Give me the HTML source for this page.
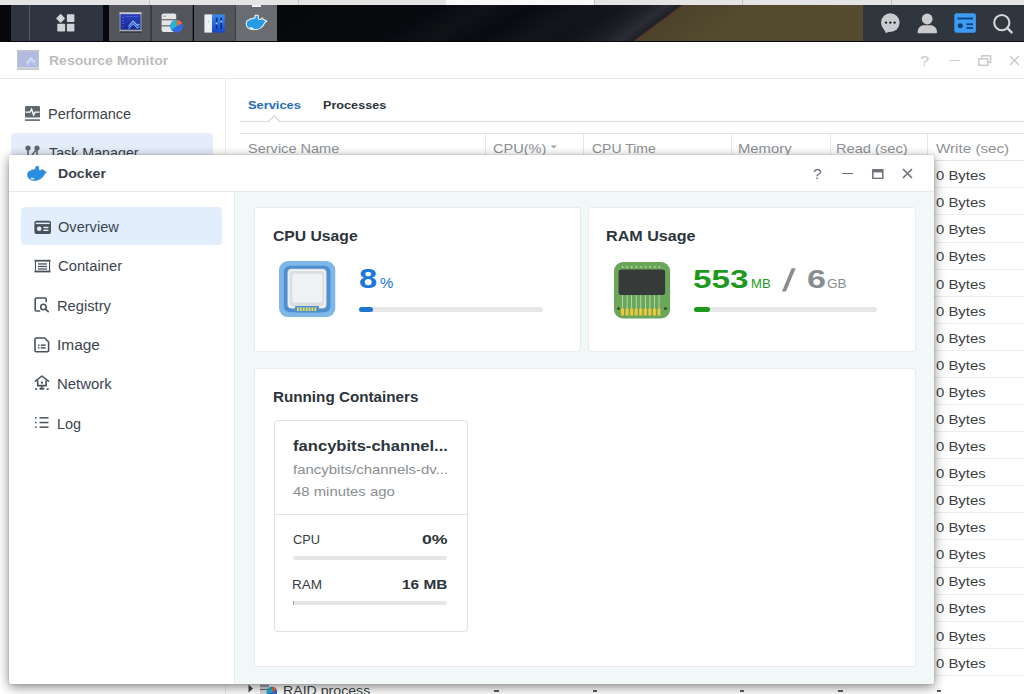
<!DOCTYPE html>
<html><head><meta charset="utf-8"><style>
html,body{margin:0;padding:0;}
body{width:1024px;height:694px;overflow:hidden;position:relative;background:#fff;font-family:"Liberation Sans",sans-serif;}
div,svg{box-sizing:border-box;}
</style></head><body>
<div style="position:absolute;left:0.00px;top:0.00px;width:1024.00px;height:5.00px;background:#e4e4e4;"></div>
<div style="position:absolute;left:446.00px;top:0.00px;width:148.00px;height:5.00px;background:#f8f8f8;"></div>
<div style="position:absolute;left:149.00px;top:0.00px;width:1.00px;height:5.00px;background:#c4c4c4;"></div>
<div style="position:absolute;left:297.50px;top:0.00px;width:1.00px;height:5.00px;background:#c4c4c4;"></div>
<div style="position:absolute;left:594.00px;top:0.00px;width:1.00px;height:5.00px;background:#c4c4c4;"></div>
<div style="position:absolute;left:742.00px;top:0.00px;width:1.00px;height:5.00px;background:#c4c4c4;"></div>
<div style="position:absolute;left:891.00px;top:0.00px;width:1.00px;height:5.00px;background:#c4c4c4;"></div>
<div style="position:absolute;left:0.00px;top:5.00px;width:1024.00px;height:36.50px;background:#07080b;"></div>
<div style="position:absolute;left:11.00px;top:5.00px;width:92.00px;height:35.50px;background:#2e3540;"></div>
<div style="position:absolute;left:29.00px;top:5.00px;width:1.00px;height:35.50px;background:#525a64;"></div>
<svg style="position:absolute;left:55.00px;top:12.00px;" width="22" height="22" viewBox="0 0 22 22"><rect x="2.3" y="2.3" width="6.6" height="6.6" rx="0.8" fill="#d0d3d7" transform="rotate(45 5.6 5.6) translate(0.6 0.6)"/><rect x="11.9" y="2.3" width="7.5" height="7.7" rx="0.8" fill="#d0d3d7"/><rect x="2.3" y="11.8" width="7.8" height="7.8" rx="0.8" fill="#d0d3d7"/><rect x="11.9" y="11.8" width="7.5" height="7.8" rx="0.8" fill="#d0d3d7"/></svg>
<div style="position:absolute;left:109.00px;top:5.00px;width:41.30px;height:35.50px;background:#52565b;"></div>
<div style="position:absolute;left:150.30px;top:5.00px;width:1.70px;height:35.50px;background:#3a3e43;"></div>
<div style="position:absolute;left:152.00px;top:5.00px;width:40.40px;height:35.50px;background:#52565b;"></div>
<div style="position:absolute;left:192.40px;top:5.00px;width:1.10px;height:35.50px;background:#3a3e43;"></div>
<div style="position:absolute;left:193.50px;top:5.00px;width:41.80px;height:35.50px;background:#52565b;"></div>
<div style="position:absolute;left:235.30px;top:5.00px;width:0.80px;height:35.50px;background:#3a3e43;"></div>
<div style="position:absolute;left:236.10px;top:5.00px;width:40.90px;height:35.50px;background:#696d72;"></div>
<div style="position:absolute;left:252.00px;top:5.00px;width:8.70px;height:2.00px;background:#f2f2f2;"></div>
<div style="position:absolute;left:277px;top:5px;width:586px;height:35.5px;background:linear-gradient(143.3deg,#07080c 0%,#0a0b10 40%,#101217 52%,#1a1d23 58%,#2a2d34 61.5%,#1e2127 63.6%,#5a3a2c 64.1%,#4d432c 64.8%,#544a2e 75%,#564b2f 100%);"></div>
<div style="position:absolute;left:277px;top:5px;width:586px;height:35.5px;background:linear-gradient(150deg,rgba(255,255,255,0) 25%,rgba(255,255,255,0.03) 33%,rgba(255,255,255,0) 40%,rgba(255,255,255,0.025) 48%,rgba(255,255,255,0) 54%);clip-path:polygon(0 0,408px 0,361px 35.5px,0 35.5px);"></div>
<div style="position:absolute;left:863.00px;top:5.00px;width:161.00px;height:35.50px;background:#30363e;"></div>
<svg style="position:absolute;left:118.50px;top:12.00px;" width="23" height="21" viewBox="0 0 23 21"><defs><linearGradient id="rmg" x1="0" y1="0" x2="0" y2="1"><stop offset="0" stop-color="#2a3fc0"/><stop offset="1" stop-color="#1a2a90"/></linearGradient></defs><rect x="0.5" y="0.4" width="22" height="20.4" fill="#8c93a0"/><rect x="0.5" y="0.4" width="22" height="1.8" fill="#c9ccd4"/><rect x="1.6" y="2.2" width="19.8" height="15.6" fill="url(#rmg)"/><rect x="0.5" y="17.8" width="22" height="1.6" fill="#a5aab4"/><rect x="0.5" y="19.4" width="22" height="1.4" fill="#2a2c33"/><rect x="3.6" y="5" width="1" height="1" fill="#6d8ae8"/><rect x="3.6" y="8" width="1" height="1" fill="#6d8ae8"/><rect x="3.6" y="11" width="1" height="1" fill="#6d8ae8"/><rect x="3.6" y="14" width="1" height="1" fill="#6d8ae8"/><rect x="6" y="4.2" width="13" height="0.8" fill="#4a66d8"/><path d="M9.5 14.5 L14 9 L18.5 13.5 L20.5 12" fill="none" stroke="#8fc4ff" stroke-width="1.1"/><path d="M9.5 17 L14 11.6 L18.5 16 L20.5 14.5" fill="none" stroke="#6aa8f8" stroke-width="1.1"/></svg>
<svg style="position:absolute;left:161.00px;top:12.50px;" width="23" height="20" viewBox="0 0 23 20"><rect x="0.6" y="0.5" width="14.6" height="18.6" rx="2" fill="#e4e5e8"/><rect x="0.6" y="6.2" width="14.6" height="1.1" fill="#55595f"/><rect x="0.6" y="12.3" width="14.6" height="1.1" fill="#55595f"/><rect x="2" y="2.5" width="3" height="1.5" fill="#c9a9ae"/><circle cx="15.6" cy="13.3" r="6.4" fill="#2f6ae0"/><path d="M15.6 13.3 L15.6 6.9 A6.4 6.4 0 0 1 21.2 10.2Z" fill="#f06a2a"/><path d="M15.6 13.3 L10.5 17 A6.4 6.4 0 0 1 15.6 6.9Z" fill="#25b6d6"/></svg>
<svg style="position:absolute;left:203.50px;top:13.50px;" width="21" height="19" viewBox="0 0 21 19"><rect x="0.4" y="0.4" width="8" height="18.2" fill="#eceef3"/><defs><linearGradient id="cpg" x1="0" y1="0" x2="0" y2="1"><stop offset="0" stop-color="#3a8cf0"/><stop offset="1" stop-color="#1448c8"/></linearGradient></defs><rect x="8" y="0.4" width="12.7" height="18.2" fill="url(#cpg)"/><rect x="11.8" y="3.6" width="1.6" height="11.5" fill="#0d2a8a"/><rect x="16.4" y="3.6" width="1.6" height="11.5" fill="#0d2a8a"/><circle cx="12.6" cy="9.4" r="1.1" fill="#8fc4ff"/><circle cx="17.2" cy="7.6" r="1.1" fill="#8fc4ff"/><circle cx="4.4" cy="12" r="2" fill="#fafbfc" stroke="#d4d7de" stroke-width="0.5"/><rect x="4" y="7" width="0.8" height="1" fill="#9aa"/></svg>
<svg style="position:absolute;left:245.00px;top:14.00px;" width="23" height="17" viewBox="0 0 23 17"><g transform="translate(0.6 0.6)"><path d="M0.6 9.2 C0.6 7.4 1.4 6 2.6 5.4 L4.2 5.4 L4.6 4.2 L7.4 4.2 L7.8 3.4 L9.4 3.4 L9.6 0.6 L12.6 0.6 L12.8 4.4 L14.6 4.8 L15.8 4.4 L16.6 3.2 L17.6 4.6 L21.2 6.6 L19.2 8.0 C17.4 12.6 13.2 15.2 8.2 15.2 C3.6 15.2 0.6 12.8 0.6 9.2Z" fill="#279be6" stroke="#eef6fb" stroke-width="1.1" stroke-linejoin="round"/><path d="M3.2 13.2 C4.8 12.2 7 12.4 8.6 14.2 C6.4 15 4.6 14.6 3.2 13.2Z" fill="#e8f4fc"/></g></svg>
<svg style="position:absolute;left:879.50px;top:12.50px;" width="21" height="21" viewBox="0 0 21 21"><circle cx="10.3" cy="9.6" r="9.3" fill="#c9cbcf"/><path d="M3.5 15 L5.8 20 L10 18.4Z" fill="#c9cbcf"/><circle cx="6" cy="9.6" r="1.2" fill="#1f2329"/><circle cx="10.3" cy="9.6" r="1.2" fill="#1f2329"/><circle cx="14.6" cy="9.6" r="1.2" fill="#1f2329"/></svg>
<svg style="position:absolute;left:917.00px;top:12.50px;" width="21" height="21" viewBox="0 0 21 21"><circle cx="10.2" cy="6" r="5.4" fill="#c9cbcf"/><path d="M0.6 19.6 C0.6 14.4 4 12.2 7 12.2 H13.4 C16.6 12.2 20 14.4 20 19.6 Q20 20.2 19.4 20.2 H1.2 Q0.6 20.2 0.6 19.6Z" fill="#c9cbcf"/></svg>
<svg style="position:absolute;left:953.50px;top:12.50px;" width="22.5" height="20.5" viewBox="0 0 22.5 20.5"><rect x="0.3" y="0.3" width="21.6" height="19.5" rx="2.2" fill="#3d9bf4"/><rect x="3.4" y="4.6" width="15.6" height="1.8" fill="#0f3f7c"/><circle cx="6.3" cy="12.8" r="2.5" fill="#0f3f7c"/><rect x="12.5" y="10.4" width="6.5" height="1.7" fill="#0f3f7c"/><rect x="12.5" y="14.2" width="6.5" height="1.7" fill="#0f3f7c"/></svg>
<svg style="position:absolute;left:991.50px;top:12.50px;" width="22" height="22" viewBox="0 0 22 22"><circle cx="9.8" cy="9.6" r="7.6" fill="none" stroke="#d3d5d8" stroke-width="2.1"/><path d="M15.4 15.2 L19.6 19.4" stroke="#d3d5d8" stroke-width="2.4" stroke-linecap="round"/></svg>
<div style="position:absolute;left:0;top:41.5px;width:1024px;height:660px;background:#fff;border-radius:5px 0 0 0;"></div>
<div style="position:absolute;left:0.00px;top:78.00px;width:1024.00px;height:1.00px;background:#e9e9e9;"></div>
<div style="position:absolute;left:224.50px;top:79.00px;width:1.00px;height:615.00px;background:#ededed;"></div>
<svg style="position:absolute;left:17.00px;top:50.00px;" width="22" height="20" viewBox="0 0 22 20"><rect x="0" y="0" width="22" height="20" fill="#c3c5cc"/><rect x="1" y="1.6" width="20" height="15.4" fill="#b3bae0"/><rect x="0" y="17.2" width="22" height="1.3" fill="#d6d8de"/><path d="M9.5 13 L14 8.2 L18.5 12.4" fill="none" stroke="#dbe8ff" stroke-width="1.2"/><path d="M9.5 15.4 L14 10.6 L18.5 14.8" fill="none" stroke="#c4d6fa" stroke-width="1.1"/></svg>
<div style="position:absolute;left:48.89px;top:54px;font-size:13.10px;line-height:13.10px;font-weight:bold;color:#bbbdc0;white-space:nowrap;transform:scaleX(1.0707);transform-origin:0 0;">Resource Monitor</div>
<div style="position:absolute;left:919.94px;top:54px;font-size:14.55px;line-height:14.55px;font-weight:normal;color:#c9cbcd;white-space:nowrap;transform:scaleX(1.1312);transform-origin:0 0;">?</div>
<div style="position:absolute;left:949.00px;top:59.50px;width:11.00px;height:1.50px;background:#cbcdcf;"></div>
<svg style="position:absolute;left:978.00px;top:55.00px;" width="14" height="11" viewBox="0 0 14 11"><rect x="3.6" y="0.8" width="9" height="6.5" fill="none" stroke="#c8cacc" stroke-width="1.5"/><rect x="0.8" y="3.8" width="9" height="6.5" fill="#fff" stroke="#c8cacc" stroke-width="1.5"/></svg>
<svg style="position:absolute;left:1009.00px;top:55.00px;" width="11" height="11" viewBox="0 0 11 11"><path d="M1 1 L10 10 M10 1 L1 10" stroke="#c8cacc" stroke-width="1.5"/></svg>
<svg style="position:absolute;left:25.00px;top:106.00px;" width="15" height="15" viewBox="0 0 15 15"><rect x="0" y="0" width="15" height="11.6" rx="1.2" fill="#5f6770"/><rect x="0" y="13.3" width="15" height="1.6" fill="#5f6770"/><path d="M0.5 6.2 H5 L6.6 3.2 L8.6 9 L10 6.2 H14.5" fill="none" stroke="#fff" stroke-width="1.3"/></svg>
<div style="position:absolute;left:48.14px;top:107px;font-size:14.55px;line-height:14.55px;font-weight:normal;color:#3e444a;white-space:nowrap;transform:scaleX(0.9990);transform-origin:0 0;">Performance</div>
<div style="position:absolute;left:11.20px;top:133.40px;width:201.60px;height:46.60px;background:#e3eefa;border-radius:4px;"></div>
<svg style="position:absolute;left:25.00px;top:145.00px;" width="16" height="16" viewBox="0 0 16 16"><circle cx="3" cy="3" r="2.6" fill="#5f6770"/><circle cx="12" cy="3" r="2.6" fill="#5f6770"/><path d="M3 3 V15 M12 3 V15 M4 14 L11 5" stroke="#5f6770" stroke-width="1.6"/></svg>
<div style="position:absolute;left:48.91px;top:146px;font-size:14.55px;line-height:14.55px;font-weight:normal;color:#3e444a;white-space:nowrap;transform:scaleX(0.9806);transform-origin:0 0;">Task Manager</div>
<div style="position:absolute;left:248.01px;top:100px;font-size:11.80px;line-height:11.80px;font-weight:bold;color:#1f6db5;white-space:nowrap;transform:scaleX(1.0894);transform-origin:0 0;">Services</div>
<div style="position:absolute;left:322.98px;top:100px;font-size:11.80px;line-height:11.80px;font-weight:bold;color:#2b3137;white-space:nowrap;transform:scaleX(1.0723);transform-origin:0 0;">Processes</div>
<div style="position:absolute;left:240.00px;top:121.00px;width:784.00px;height:1.00px;background:#dcdcdc;"></div>
<svg style="position:absolute;left:266.00px;top:114.50px;" width="16" height="8" viewBox="0 0 16 8"><rect x="2.6" y="6.4" width="10.6" height="1.4" fill="#fff"/><path d="M1.6 7.2 L8.3 0.9 L14 7.2" fill="#fff" stroke="#d2d2d2" stroke-width="1.1"/></svg>
<div style="position:absolute;left:240.00px;top:133.00px;width:784.00px;height:1.00px;background:#e4e4e4;"></div>
<div style="position:absolute;left:247.75px;top:142px;font-size:13.10px;line-height:13.10px;font-weight:normal;color:#8d9195;white-space:nowrap;transform:scaleX(1.1099);transform-origin:0 0;">Service Name</div>
<div style="position:absolute;left:493.07px;top:142px;font-size:13.10px;line-height:13.10px;font-weight:normal;color:#8d9195;white-space:nowrap;transform:scaleX(1.1123);transform-origin:0 0;">CPU(%)</div>
<div style="position:absolute;left:591.50px;top:142px;font-size:13.10px;line-height:13.10px;font-weight:normal;color:#8d9195;white-space:nowrap;transform:scaleX(1.0680);transform-origin:0 0;">CPU Time</div>
<div style="position:absolute;left:737.91px;top:142px;font-size:13.10px;line-height:13.10px;font-weight:normal;color:#8d9195;white-space:nowrap;transform:scaleX(1.1331);transform-origin:0 0;">Memory</div>
<div style="position:absolute;left:836.43px;top:142px;font-size:13.10px;line-height:13.10px;font-weight:normal;color:#8d9195;white-space:nowrap;transform:scaleX(1.1185);transform-origin:0 0;">Read (sec)</div>
<div style="position:absolute;left:935.82px;top:142px;font-size:13.10px;line-height:13.10px;font-weight:normal;color:#8d9195;white-space:nowrap;transform:scaleX(1.1599);transform-origin:0 0;">Write (sec)</div>
<svg style="position:absolute;left:550.00px;top:145.00px;" width="8" height="4" viewBox="0 0 8 4"><path d="M0.6 0.4 L6.8 0.4 L3.7 3.2Z" fill="#9a9ea2"/></svg>
<div style="position:absolute;left:485.00px;top:134.00px;width:1.00px;height:26.00px;background:#e8e8e8;"></div>
<div style="position:absolute;left:583.00px;top:134.00px;width:1.00px;height:26.00px;background:#e8e8e8;"></div>
<div style="position:absolute;left:731.00px;top:134.00px;width:1.00px;height:26.00px;background:#e8e8e8;"></div>
<div style="position:absolute;left:829.50px;top:134.00px;width:1.00px;height:26.00px;background:#e8e8e8;"></div>
<div style="position:absolute;left:927.00px;top:134.00px;width:1.00px;height:26.00px;background:#e8e8e8;"></div>
<div style="position:absolute;left:240.00px;top:160.00px;width:784.00px;height:1.00px;background:#e6e6e6;"></div>
<div style="position:absolute;left:240.00px;top:187.38px;width:784.00px;height:1.00px;background:#ececec;"></div>
<div style="position:absolute;left:240.00px;top:214.46px;width:784.00px;height:1.00px;background:#ececec;"></div>
<div style="position:absolute;left:240.00px;top:241.54px;width:784.00px;height:1.00px;background:#ececec;"></div>
<div style="position:absolute;left:240.00px;top:268.62px;width:784.00px;height:1.00px;background:#ececec;"></div>
<div style="position:absolute;left:240.00px;top:295.70px;width:784.00px;height:1.00px;background:#ececec;"></div>
<div style="position:absolute;left:240.00px;top:322.78px;width:784.00px;height:1.00px;background:#ececec;"></div>
<div style="position:absolute;left:240.00px;top:349.86px;width:784.00px;height:1.00px;background:#ececec;"></div>
<div style="position:absolute;left:240.00px;top:376.94px;width:784.00px;height:1.00px;background:#ececec;"></div>
<div style="position:absolute;left:240.00px;top:404.02px;width:784.00px;height:1.00px;background:#ececec;"></div>
<div style="position:absolute;left:240.00px;top:431.10px;width:784.00px;height:1.00px;background:#ececec;"></div>
<div style="position:absolute;left:240.00px;top:458.18px;width:784.00px;height:1.00px;background:#ececec;"></div>
<div style="position:absolute;left:240.00px;top:485.26px;width:784.00px;height:1.00px;background:#ececec;"></div>
<div style="position:absolute;left:240.00px;top:512.34px;width:784.00px;height:1.00px;background:#ececec;"></div>
<div style="position:absolute;left:240.00px;top:539.42px;width:784.00px;height:1.00px;background:#ececec;"></div>
<div style="position:absolute;left:240.00px;top:566.50px;width:784.00px;height:1.00px;background:#ececec;"></div>
<div style="position:absolute;left:240.00px;top:593.58px;width:784.00px;height:1.00px;background:#ececec;"></div>
<div style="position:absolute;left:240.00px;top:620.66px;width:784.00px;height:1.00px;background:#ececec;"></div>
<div style="position:absolute;left:240.00px;top:647.74px;width:784.00px;height:1.00px;background:#ececec;"></div>
<div style="position:absolute;left:240.00px;top:674.82px;width:784.00px;height:1.00px;background:#ececec;"></div>
<div style="position:absolute;left:240.00px;top:701.90px;width:784.00px;height:1.00px;background:#ececec;"></div>
<div style="position:absolute;left:935.60px;top:169px;font-size:13.10px;line-height:13.10px;font-weight:normal;color:#3a3f44;white-space:nowrap;transform:scaleX(1.1380);transform-origin:0 0;">0 Bytes</div>
<div style="position:absolute;left:935.60px;top:196px;font-size:13.10px;line-height:13.10px;font-weight:normal;color:#3a3f44;white-space:nowrap;transform:scaleX(1.1380);transform-origin:0 0;">0 Bytes</div>
<div style="position:absolute;left:935.60px;top:223px;font-size:13.10px;line-height:13.10px;font-weight:normal;color:#3a3f44;white-space:nowrap;transform:scaleX(1.1380);transform-origin:0 0;">0 Bytes</div>
<div style="position:absolute;left:935.60px;top:250px;font-size:13.10px;line-height:13.10px;font-weight:normal;color:#3a3f44;white-space:nowrap;transform:scaleX(1.1380);transform-origin:0 0;">0 Bytes</div>
<div style="position:absolute;left:935.60px;top:278px;font-size:13.10px;line-height:13.10px;font-weight:normal;color:#3a3f44;white-space:nowrap;transform:scaleX(1.1380);transform-origin:0 0;">0 Bytes</div>
<div style="position:absolute;left:935.60px;top:305px;font-size:13.10px;line-height:13.10px;font-weight:normal;color:#3a3f44;white-space:nowrap;transform:scaleX(1.1380);transform-origin:0 0;">0 Bytes</div>
<div style="position:absolute;left:935.60px;top:332px;font-size:13.10px;line-height:13.10px;font-weight:normal;color:#3a3f44;white-space:nowrap;transform:scaleX(1.1380);transform-origin:0 0;">0 Bytes</div>
<div style="position:absolute;left:935.60px;top:359px;font-size:13.10px;line-height:13.10px;font-weight:normal;color:#3a3f44;white-space:nowrap;transform:scaleX(1.1380);transform-origin:0 0;">0 Bytes</div>
<div style="position:absolute;left:935.60px;top:386px;font-size:13.10px;line-height:13.10px;font-weight:normal;color:#3a3f44;white-space:nowrap;transform:scaleX(1.1380);transform-origin:0 0;">0 Bytes</div>
<div style="position:absolute;left:935.60px;top:413px;font-size:13.10px;line-height:13.10px;font-weight:normal;color:#3a3f44;white-space:nowrap;transform:scaleX(1.1380);transform-origin:0 0;">0 Bytes</div>
<div style="position:absolute;left:935.60px;top:440px;font-size:13.10px;line-height:13.10px;font-weight:normal;color:#3a3f44;white-space:nowrap;transform:scaleX(1.1380);transform-origin:0 0;">0 Bytes</div>
<div style="position:absolute;left:935.60px;top:467px;font-size:13.10px;line-height:13.10px;font-weight:normal;color:#3a3f44;white-space:nowrap;transform:scaleX(1.1380);transform-origin:0 0;">0 Bytes</div>
<div style="position:absolute;left:935.60px;top:494px;font-size:13.10px;line-height:13.10px;font-weight:normal;color:#3a3f44;white-space:nowrap;transform:scaleX(1.1380);transform-origin:0 0;">0 Bytes</div>
<div style="position:absolute;left:935.60px;top:521px;font-size:13.10px;line-height:13.10px;font-weight:normal;color:#3a3f44;white-space:nowrap;transform:scaleX(1.1380);transform-origin:0 0;">0 Bytes</div>
<div style="position:absolute;left:935.60px;top:548px;font-size:13.10px;line-height:13.10px;font-weight:normal;color:#3a3f44;white-space:nowrap;transform:scaleX(1.1380);transform-origin:0 0;">0 Bytes</div>
<div style="position:absolute;left:935.60px;top:575px;font-size:13.10px;line-height:13.10px;font-weight:normal;color:#3a3f44;white-space:nowrap;transform:scaleX(1.1380);transform-origin:0 0;">0 Bytes</div>
<div style="position:absolute;left:935.60px;top:602px;font-size:13.10px;line-height:13.10px;font-weight:normal;color:#3a3f44;white-space:nowrap;transform:scaleX(1.1380);transform-origin:0 0;">0 Bytes</div>
<div style="position:absolute;left:935.60px;top:630px;font-size:13.10px;line-height:13.10px;font-weight:normal;color:#3a3f44;white-space:nowrap;transform:scaleX(1.1380);transform-origin:0 0;">0 Bytes</div>
<div style="position:absolute;left:935.60px;top:657px;font-size:13.10px;line-height:13.10px;font-weight:normal;color:#3a3f44;white-space:nowrap;transform:scaleX(1.1380);transform-origin:0 0;">0 Bytes</div>
<div style="position:absolute;left:494.40px;top:690.00px;width:4.70px;height:1.70px;background:#5a5e62;"></div>
<div style="position:absolute;left:592.80px;top:690.00px;width:4.70px;height:1.70px;background:#5a5e62;"></div>
<div style="position:absolute;left:739.70px;top:690.00px;width:4.70px;height:1.70px;background:#5a5e62;"></div>
<div style="position:absolute;left:838.20px;top:690.00px;width:4.70px;height:1.70px;background:#5a5e62;"></div>
<div style="position:absolute;left:936.50px;top:690.00px;width:4.70px;height:1.70px;background:#5a5e62;"></div>
<svg style="position:absolute;left:248.00px;top:684.00px;" width="6" height="9" viewBox="0 0 6 9"><path d="M0.5 0.5 L5 4.5 L0.5 8.5Z" fill="#444"/></svg>
<svg style="position:absolute;left:259.00px;top:683.00px;" width="18" height="11" viewBox="0 0 18 11"><rect x="1" y="1" width="9" height="10" fill="#d5d8dc"/><rect x="1" y="2.5" width="9" height="1" fill="#6a6f75"/><rect x="1" y="6" width="9" height="1" fill="#6a6f75"/><circle cx="13" cy="9.2" r="5.4" fill="#3568d8"/><path d="M13 9.2 L13 3.8 A5.4 5.4 0 0 1 17.6 6.4Z" fill="#e0703a"/><path d="M13 9.2 L8 11 A5.4 5.4 0 0 1 13 3.8Z" fill="#1fb0c8"/></svg>
<div style="position:absolute;left:283.27px;top:684px;font-size:13.50px;line-height:13.50px;font-weight:normal;color:#3a3f44;white-space:nowrap;transform:scaleX(1.0472);transform-origin:0 0;">RAID process</div>
<div style="position:absolute;left:8.6px;top:154.7px;width:925.1px;height:529.4px;background:#fff;border-radius:2px;box-shadow:0 3px 12px rgba(0,0,0,0.48), 0 0 2px rgba(0,0,0,0.2);overflow:hidden;">
</div>
<div style="position:absolute;left:8.60px;top:190.80px;width:925.10px;height:1.00px;background:#e6e9eb;"></div>
<div style="position:absolute;left:234.00px;top:191.80px;width:699.70px;height:492.40px;background:#f2f7f7;border-bottom-right-radius:3px;"></div>
<div style="position:absolute;left:233.60px;top:191.80px;width:1.00px;height:492.40px;background:#e7ecee;"></div>
<svg style="position:absolute;left:26.80px;top:165.80px;" width="21" height="16" viewBox="0 0 21 16"><g transform="scale(0.92 0.95)"><path d="M0.6 9.2 C0.6 7.4 1.4 6 2.6 5.4 L4.2 5.4 L4.6 4.2 L7.4 4.2 L7.8 3.4 L9.4 3.4 L9.6 0.6 L12.6 0.6 L12.8 4.4 L14.6 4.8 L15.8 4.4 L16.6 3.2 L17.6 4.6 L21.2 6.6 L19.2 8.0 C17.4 12.6 13.2 15.2 8.2 15.2 C3.6 15.2 0.6 12.8 0.6 9.2Z" fill="#2a8de0" stroke="#1f74c4" stroke-width="0.6" stroke-linejoin="round"/><path d="M3.4 13 C5 12 7 12.2 8.6 13.8 C6.5 14.6 4.8 14.3 3.4 13Z" fill="#dff0fb"/></g></svg>
<div style="position:absolute;left:57.88px;top:167px;font-size:13.10px;line-height:13.10px;font-weight:bold;color:#3a4047;white-space:nowrap;transform:scaleX(1.0793);transform-origin:0 0;">Docker</div>
<div style="position:absolute;left:813.08px;top:167px;font-size:14.85px;line-height:14.85px;font-weight:normal;color:#6b7177;white-space:nowrap;transform:scaleX(1.0522);transform-origin:0 0;">?</div>
<div style="position:absolute;left:841.70px;top:172.50px;width:11.60px;height:1.50px;background:#6b7177;"></div>
<svg style="position:absolute;left:871.50px;top:168.50px;" width="12" height="10" viewBox="0 0 12 10"><rect x="0.8" y="0.8" width="10" height="8.6" fill="none" stroke="#6b7177" stroke-width="1.5"/><rect x="0.8" y="0.8" width="10" height="2.6" fill="#6b7177"/></svg>
<svg style="position:absolute;left:902.00px;top:168.30px;" width="11" height="11" viewBox="0 0 11 11"><path d="M1 1 L10 10 M10 1 L1 10" stroke="#6b7177" stroke-width="1.6"/></svg>
<div style="position:absolute;left:20.80px;top:206.80px;width:201.50px;height:38.70px;background:#e2eefb;border-radius:4px;"></div>
<div style="position:absolute;left:57.84px;top:220px;font-size:14.55px;line-height:14.55px;font-weight:normal;color:#3b4651;white-space:nowrap;transform:scaleX(1.0030);transform-origin:0 0;">Overview</div>
<div style="position:absolute;left:57.76px;top:259px;font-size:14.55px;line-height:14.55px;font-weight:normal;color:#3b4651;white-space:nowrap;transform:scaleX(1.0156);transform-origin:0 0;">Container</div>
<div style="position:absolute;left:57.32px;top:299px;font-size:14.55px;line-height:14.55px;font-weight:normal;color:#3b4651;white-space:nowrap;transform:scaleX(1.0108);transform-origin:0 0;">Registry</div>
<div style="position:absolute;left:57.11px;top:338px;font-size:14.55px;line-height:14.55px;font-weight:normal;color:#3b4651;white-space:nowrap;transform:scaleX(1.0628);transform-origin:0 0;">Image</div>
<div style="position:absolute;left:57.31px;top:377px;font-size:14.55px;line-height:14.55px;font-weight:normal;color:#3b4651;white-space:nowrap;transform:scaleX(1.0261);transform-origin:0 0;">Network</div>
<div style="position:absolute;left:57.35px;top:417px;font-size:14.55px;line-height:14.55px;font-weight:normal;color:#3b4651;white-space:nowrap;transform:scaleX(0.9902);transform-origin:0 0;">Log</div>
<svg style="position:absolute;left:33.50px;top:219.50px;" width="18" height="15" viewBox="0 0 18 15"><rect x="0.4" y="0.8" width="16.6" height="13.2" rx="2" fill="#4a535b"/><rect x="1.8" y="2.6" width="13.8" height="1.5" fill="#e1edf9"/><circle cx="5.2" cy="8.7" r="2.3" fill="#e1edf9"/><rect x="9.4" y="6.8" width="5" height="1.4" fill="#e1edf9"/><rect x="9.4" y="9.6" width="5" height="1.4" fill="#e1edf9"/></svg>
<svg style="position:absolute;left:33.50px;top:258.50px;" width="17" height="15" viewBox="0 0 17 15"><rect x="0.5" y="0.8" width="16" height="1.8" fill="#4a535b"/><rect x="0.5" y="11.6" width="16" height="1.8" fill="#4a535b"/><rect x="0.9" y="2.4" width="1.1" height="9.4" fill="#4a535b"/><rect x="15" y="2.4" width="1.1" height="9.4" fill="#4a535b"/><rect x="4" y="4.3" width="9" height="1.3" fill="#4a535b"/><rect x="4" y="6.8" width="9" height="1.3" fill="#4a535b"/><rect x="4" y="9.3" width="9" height="1.3" fill="#4a535b"/></svg>
<svg style="position:absolute;left:34.00px;top:297.00px;" width="16" height="16" viewBox="0 0 16 16"><path d="M5.6 14 H2.4 Q1.2 14 1.2 12.8 V2.2 Q1.2 1 2.4 1 H11 Q12.2 1 12.2 2.2 V4.6" fill="none" stroke="#4a535b" stroke-width="1.6" stroke-linecap="round"/><circle cx="9.4" cy="10" r="2.7" fill="none" stroke="#4a535b" stroke-width="1.6"/><path d="M11.5 12.1 L14.2 14.6" stroke="#4a535b" stroke-width="1.7" stroke-linecap="round"/></svg>
<svg style="position:absolute;left:34.00px;top:336.50px;" width="16" height="16" viewBox="0 0 16 16"><path d="M2.2 1 H10.6 L14.6 5 V13.6 Q14.6 14.8 13.4 14.8 H2.2 Q1 14.8 1 13.6 V2.2 Q1 1 2.2 1Z" fill="none" stroke="#4a535b" stroke-width="1.6" stroke-linejoin="round"/><rect x="4" y="7.4" width="1.5" height="1.5" fill="#4a535b"/><rect x="6.8" y="7.4" width="4.8" height="1.5" fill="#4a535b"/><rect x="4" y="10.1" width="1.5" height="1.5" fill="#4a535b"/><rect x="6.8" y="10.1" width="4.8" height="1.5" fill="#4a535b"/></svg>
<svg style="position:absolute;left:34.00px;top:375.00px;" width="16" height="15" viewBox="0 0 16 15"><path d="M1.4 6.2 L7.9 1 L14.4 6.2" fill="none" stroke="#4a535b" stroke-width="1.6" stroke-linecap="round" stroke-linejoin="round"/><path d="M3.7 5.6 V10.6 H12.1 V5.6" fill="none" stroke="#4a535b" stroke-width="1.6"/><rect x="6.9" y="6.6" width="2" height="2" fill="#4a535b"/><path d="M7.9 10.6 V12.6" stroke="#4a535b" stroke-width="1.5"/><rect x="1" y="13.3" width="2.2" height="1.5" fill="#4a535b"/><rect x="12.6" y="13.3" width="2.2" height="1.5" fill="#4a535b"/><rect x="5.4" y="12.6" width="5" height="2.2" rx="1" fill="#4a535b"/></svg>
<svg style="position:absolute;left:34.00px;top:416.00px;" width="16" height="13" viewBox="0 0 16 13"><rect x="1" y="1.1" width="1.6" height="1.5" fill="#4a535b"/><rect x="1" y="5.8" width="1.6" height="1.5" fill="#4a535b"/><rect x="1" y="10.4" width="1.6" height="1.5" fill="#4a535b"/><rect x="5.5" y="1.1" width="9" height="1.5" fill="#4a535b"/><rect x="5.5" y="5.8" width="9" height="1.5" fill="#4a535b"/><rect x="5.5" y="10.4" width="9" height="1.5" fill="#4a535b"/></svg>
<div style="position:absolute;left:254.00px;top:207.40px;width:327.00px;height:144.20px;background:#fff;border-radius:3px;border:1px solid #e7ebed;"></div>
<div style="position:absolute;left:588.40px;top:207.40px;width:327.20px;height:144.20px;background:#fff;border-radius:3px;border:1px solid #e7ebed;"></div>
<div style="position:absolute;left:254.00px;top:367.90px;width:661.60px;height:299.40px;background:#fff;border-radius:3px;border:1px solid #e7ebed;"></div>
<div style="position:absolute;left:273.27px;top:229px;font-size:14.55px;line-height:14.55px;font-weight:bold;color:#2c343c;white-space:nowrap;transform:scaleX(1.0797);transform-origin:0 0;">CPU Usage</div>
<div style="position:absolute;left:606.25px;top:229px;font-size:14.55px;line-height:14.55px;font-weight:bold;color:#2c343c;white-space:nowrap;transform:scaleX(1.1075);transform-origin:0 0;">RAM Usage</div>
<svg style="position:absolute;left:279.30px;top:261.20px;" width="57" height="57" viewBox="0 0 57 57"><rect x="0" y="0" width="56.3" height="56.1" rx="9" fill="#7fb7e8"/><rect x="4.8" y="4.8" width="46.7" height="46.5" rx="6" fill="#4e8fd0"/><rect x="8.5" y="7.8" width="39" height="39.8" rx="4" fill="#dcdde1"/><rect x="10" y="9.3" width="36" height="36.8" rx="3" fill="none" stroke="#f4f5f6" stroke-width="1.2"/><rect x="13.3" y="12.8" width="30" height="28.6" rx="2.5" fill="#f0f1f3"/><rect x="16" y="45" width="24" height="6.5" rx="1" fill="#4e8fd0"/><rect x="18.0" y="46.4" width="1.9" height="3.6" fill="#e0dc5c"/><rect x="20.9" y="46.4" width="1.9" height="3.6" fill="#e0dc5c"/><rect x="23.8" y="46.4" width="1.9" height="3.6" fill="#e0dc5c"/><rect x="26.7" y="46.4" width="1.9" height="3.6" fill="#e0dc5c"/><rect x="29.6" y="46.4" width="1.9" height="3.6" fill="#e0dc5c"/><rect x="32.5" y="46.4" width="1.9" height="3.6" fill="#e0dc5c"/><rect x="35.4" y="46.4" width="1.9" height="3.6" fill="#e0dc5c"/></svg>
<div style="position:absolute;left:359.22px;top:265px;font-size:27.60px;line-height:27.60px;font-weight:bold;color:#1a78d6;white-space:nowrap;transform:scaleX(1.1858);transform-origin:0 0;">8</div>
<div style="position:absolute;left:380.18px;top:277px;font-size:13.95px;line-height:13.95px;font-weight:normal;color:#1a78d6;white-space:nowrap;transform:scaleX(1.0753);transform-origin:0 0;">%</div>
<div style="position:absolute;left:359.10px;top:307.40px;width:184.00px;height:4.90px;background:#e5e6e8;border-radius:2.5px;"></div>
<div style="position:absolute;left:359.10px;top:307.40px;width:14.30px;height:4.90px;background:#1e76d0;border-radius:2.5px;"></div>
<svg style="position:absolute;left:613.90px;top:262.00px;" width="57" height="57" viewBox="0 0 57 57"><rect x="0" y="0" width="56.1" height="56.4" rx="9" fill="#6aa75b"/><rect x="8.00" y="4.3" width="1.2" height="1.5" fill="#d4e8c8"/><rect x="12.60" y="4.3" width="1.2" height="1.5" fill="#d4e8c8"/><rect x="17.20" y="4.3" width="1.2" height="1.5" fill="#d4e8c8"/><rect x="21.80" y="4.3" width="1.2" height="1.5" fill="#d4e8c8"/><rect x="26.40" y="4.3" width="1.2" height="1.5" fill="#d4e8c8"/><rect x="31.00" y="4.3" width="1.2" height="1.5" fill="#d4e8c8"/><rect x="35.60" y="4.3" width="1.2" height="1.5" fill="#d4e8c8"/><rect x="40.20" y="4.3" width="1.2" height="1.5" fill="#d4e8c8"/><rect x="44.80" y="4.3" width="1.2" height="1.5" fill="#d4e8c8"/><rect x="4.6" y="7.5" width="46.5" height="25.5" rx="2.5" fill="#363a39"/><rect x="8.20" y="33" width="0.7" height="14" fill="#cfe6c2"/><rect x="12.76" y="33" width="0.7" height="14" fill="#cfe6c2"/><rect x="17.32" y="33" width="0.7" height="14" fill="#cfe6c2"/><rect x="21.88" y="33" width="0.7" height="14" fill="#cfe6c2"/><rect x="26.44" y="33" width="0.7" height="14" fill="#cfe6c2"/><rect x="31.00" y="33" width="0.7" height="14" fill="#cfe6c2"/><rect x="35.56" y="33" width="0.7" height="14" fill="#cfe6c2"/><rect x="40.12" y="33" width="0.7" height="14" fill="#cfe6c2"/><rect x="44.68" y="33" width="0.7" height="14" fill="#cfe6c2"/><rect x="7.00" y="46.5" width="3" height="7" rx="0.5" fill="#f2c73a"/><rect x="11.56" y="46.5" width="3" height="7" rx="0.5" fill="#f2c73a"/><rect x="16.12" y="46.5" width="3" height="7" rx="0.5" fill="#f2c73a"/><rect x="20.68" y="46.5" width="3" height="7" rx="0.5" fill="#f2c73a"/><rect x="25.24" y="46.5" width="3" height="7" rx="0.5" fill="#f2c73a"/><rect x="29.80" y="46.5" width="3" height="7" rx="0.5" fill="#f2c73a"/><rect x="34.36" y="46.5" width="3" height="7" rx="0.5" fill="#f2c73a"/><rect x="38.92" y="46.5" width="3" height="7" rx="0.5" fill="#f2c73a"/><rect x="43.48" y="46.5" width="3" height="7" rx="0.5" fill="#f2c73a"/><circle cx="4.5" cy="46.5" r="1.5" fill="#33502c"/><circle cx="51.5" cy="46.5" r="1.5" fill="#33502c"/></svg>
<div style="position:absolute;left:693.30px;top:266px;font-size:26.15px;line-height:26.15px;font-weight:bold;color:#1d9a1d;white-space:nowrap;transform:scaleX(1.2739);transform-origin:0 0;">553</div>
<div style="position:absolute;left:751.05px;top:277px;font-size:13.10px;line-height:13.10px;font-weight:normal;color:#1d9a1d;white-space:nowrap;transform:scaleX(0.9974);transform-origin:0 0;">MB</div>
<svg style="position:absolute;left:781.00px;top:267.00px;" width="16" height="26" viewBox="0 0 16 26"><path d="M10.6 1.2 H14.6 L5 24.6 H1Z" fill="#888c90"/></svg>
<div style="position:absolute;left:807.00px;top:266px;font-size:26.15px;line-height:26.15px;font-weight:bold;color:#888c90;white-space:nowrap;transform:scaleX(1.3089);transform-origin:0 0;">6</div>
<div style="position:absolute;left:827.02px;top:277px;font-size:13.10px;line-height:13.10px;font-weight:normal;color:#888c90;white-space:nowrap;transform:scaleX(1.0329);transform-origin:0 0;">GB</div>
<div style="position:absolute;left:693.50px;top:307.00px;width:183.60px;height:5.30px;background:#e5e6e8;border-radius:2.5px;"></div>
<div style="position:absolute;left:693.50px;top:307.00px;width:16.00px;height:5.30px;background:#1d9a1d;border-radius:2.5px;"></div>
<div style="position:absolute;left:272.91px;top:390px;font-size:14.55px;line-height:14.55px;font-weight:bold;color:#2c343c;white-space:nowrap;transform:scaleX(1.0458);transform-origin:0 0;">Running Containers</div>
<div style="position:absolute;left:273.60px;top:419.50px;width:194.80px;height:212.00px;background:#fff;border:1px solid #dde1e4;border-radius:4px;"></div>
<div style="position:absolute;left:293.05px;top:438px;font-size:15.40px;line-height:15.40px;font-weight:bold;color:#2c343c;white-space:nowrap;transform:scaleX(1.0784);transform-origin:0 0;">fancybits-channel...</div>
<div style="position:absolute;left:293.08px;top:463px;font-size:13.65px;line-height:13.65px;font-weight:normal;color:#8a8e92;white-space:nowrap;transform:scaleX(1.0964);transform-origin:0 0;">fancybits/channels-dv...</div>
<div style="position:absolute;left:293.00px;top:485px;font-size:13.10px;line-height:13.10px;font-weight:normal;color:#8a8e92;white-space:nowrap;transform:scaleX(1.1369);transform-origin:0 0;">48 minutes ago</div>
<div style="position:absolute;left:274.60px;top:514.20px;width:192.80px;height:1.00px;background:#e3e6e8;"></div>
<div style="position:absolute;left:292.66px;top:533px;font-size:13.10px;line-height:13.10px;font-weight:normal;color:#353b41;white-space:nowrap;transform:scaleX(0.9768);transform-origin:0 0;">CPU</div>
<div style="position:absolute;left:421.69px;top:533px;font-size:13.10px;line-height:13.10px;font-weight:bold;color:#2c343c;white-space:nowrap;transform:scaleX(1.3552);transform-origin:0 0;">0%</div>
<div style="position:absolute;left:293.30px;top:555.60px;width:153.70px;height:4.40px;background:#e5e6e8;border-radius:2.2px;"></div>
<div style="position:absolute;left:292.22px;top:578px;font-size:13.10px;line-height:13.10px;font-weight:normal;color:#353b41;white-space:nowrap;transform:scaleX(1.0339);transform-origin:0 0;">RAM</div>
<div style="position:absolute;left:402.28px;top:578px;font-size:13.10px;line-height:13.10px;font-weight:bold;color:#2c343c;white-space:nowrap;transform:scaleX(1.1746);transform-origin:0 0;">16 MB</div>
<div style="position:absolute;left:293.30px;top:600.50px;width:153.70px;height:4.30px;background:#e5e6e8;border-radius:2.2px;"></div>
<div style="position:absolute;left:293.30px;top:600.50px;width:1.00px;height:4.30px;background:#9aa0a5;"></div>
</body></html>
